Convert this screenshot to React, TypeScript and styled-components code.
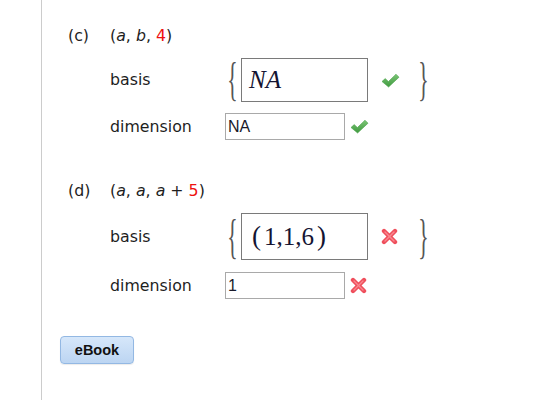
import React from "react";
import styled, { createGlobalStyle } from "styled-components";

const GlobalStyle = createGlobalStyle`
  html, body {
    margin: 0;
    padding: 0;
    background: #fff;
  }
`;

const Page = styled.div`
  margin-left: 41px;
  min-height: 400px;
  border-left: 1px solid #cccccc;
  font-family: "DejaVu Sans", Verdana, sans-serif;
  font-size: 15.8px;
  color: #1e1e1e;
  padding-top: 27px;
  box-sizing: border-box;
`;

const Part = styled.div<{ $gap?: number }>`
  padding-left: 26px;
  margin-bottom: ${(p) => p.$gap ?? 0}px;
`;

const PartHead = styled.div`
  display: flex;
  height: 18px;
  line-height: 18px;
`;

const PartLetter = styled.span`
  width: 42px;
`;

const Var = styled.i`
  font-style: italic;
`;

const Red = styled.span`
  color: #ee1111;
`;

const Row = styled.div<{ $top: number }>`
  display: grid;
  grid-template-columns: 115px auto;
  align-items: center;
  padding-left: 42px;
  margin-top: ${(p) => p.$top}px;
`;

const Label = styled.span`
  line-height: 18px;
`;

const Field = styled.div`
  display: flex;
  align-items: center;
`;

const Brace = styled.span<{ $h: number }>`
  font-family: "Liberation Serif", "Times New Roman", serif;
  font-size: 36px;
  line-height: 36px;
  color: #555;
  display: inline-block;
  width: 11px;
  text-align: center;
  transform: scaleY(${(p) => p.$h / 36}) scaleX(0.6);
  transform-origin: center;
`;

const MathBox = styled.div<{ $h: number }>`
  width: 127px;
  height: ${(p) => p.$h}px;
  box-sizing: border-box;
  border: 1px solid #7a7a7a;
  margin-left: 5px;
  display: flex;
  align-items: center;
  padding-left: 7px;
  font-family: "Liberation Serif", "Times New Roman", serif;
  font-size: 25px;
  color: #141432;
`;

const MathItalic = styled.span`
  font-style: italic;
`;

const Paren = styled.span`
  font-size: 27px;
  margin: 0 3px;
`;

const TextInput = styled.div`
  width: 120px;
  height: 27px;
  box-sizing: border-box;
  border: 1px solid #a9a9a9;
  font-family: "Liberation Sans", Arial, sans-serif;
  font-size: 16px;
  line-height: 25px;
  padding-left: 2px;
  color: #1a1a2a;
`;

const Mark = styled.span<{ $left: number; $right?: number }>`
  display: inline-flex;
  margin-left: ${(p) => p.$left}px;
  margin-right: ${(p) => p.$right ?? 0}px;
`;

const EBookButton = styled.button`
  margin: 37px 0 0 18px;
  width: 74px;
  height: 28px;
  border: 1px solid #93b8e3;
  border-radius: 4px;
  background: linear-gradient(#d6e7fa, #bcd5f2);
  font-family: "Liberation Sans", Arial, sans-serif;
  font-weight: bold;
  font-size: 14.5px;
  color: #111;
  padding: 0;
  box-shadow: 0 1px 1px rgba(0, 0, 0, 0.08);
`;

const Check = () => (
  <svg width="19" height="15" viewBox="0 0 19 15">
    <defs>
      <linearGradient id="ck" x1="0" y1="0" x2="0" y2="1">
        <stop offset="0" stopColor="#7cc576" />
        <stop offset="1" stopColor="#3f9a3f" />
      </linearGradient>
    </defs>
    <path
      d="M1 8.5 L4.2 5.6 L7.4 8.6 L15 1.2 L18 4.2 L7.6 14 Z"
      fill="url(#ck)"
      stroke="#4aa24a"
      strokeWidth="0.6"
      strokeLinejoin="round"
    />
  </svg>
);

const Cross = () => (
  <svg width="17" height="17" viewBox="0 0 17 17">
    <g stroke="#ef4f5c" strokeWidth="4.4" strokeLinecap="round">
      <line x1="3" y1="3" x2="14" y2="14" />
      <line x1="14" y1="3" x2="3" y2="14" />
    </g>
    <g stroke="#f9878f" strokeWidth="1.4" strokeLinecap="round">
      <line x1="4" y1="4" x2="13" y2="13" />
      <line x1="13" y1="4" x2="4" y2="13" />
    </g>
  </svg>
);

export default function App() {
  return (
    <>
      <GlobalStyle />
      <Page>
        <Part $gap={42}>
          <PartHead>
            <PartLetter>(c)</PartLetter>
            <span>
              (<Var>a</Var>, <Var>b</Var>, <Red>4</Red>)
            </span>
          </PartHead>
          <Row $top={13}>
            <Label>basis</Label>
            <Field>
              <Brace $h={46}>{"{"}</Brace>
              <MathBox $h={44}>
                <MathItalic>NA</MathItalic>
              </MathBox>
              <Mark $left={13} $right={16}>
                <Check />
              </Mark>
              <Brace $h={46}>{"}"}</Brace>
            </Field>
          </Row>
          <Row $top={11}>
            <Label>dimension</Label>
            <Field>
              <TextInput>NA</TextInput>
              <Mark $left={5}>
                <Check />
              </Mark>
            </Field>
          </Row>
        </Part>
        <Part>
          <PartHead>
            <PartLetter>(d)</PartLetter>
            <span>
              (<Var>a</Var>, <Var>a</Var>, <Var>a</Var> + <Red>5</Red>)
            </span>
          </PartHead>
          <Row $top={13}>
            <Label>basis</Label>
            <Field>
              <Brace $h={48}>{"{"}</Brace>
              <MathBox $h={47}>
                <Paren>(</Paren>1,1,6<Paren>)</Paren>
              </MathBox>
              <Mark $left={13} $right={18}>
                <Cross />
              </Mark>
              <Brace $h={48}>{"}"}</Brace>
            </Field>
          </Row>
          <Row $top={12}>
            <Label>dimension</Label>
            <Field>
              <TextInput>1</TextInput>
              <Mark $left={5}>
                <Cross />
              </Mark>
            </Field>
          </Row>
        </Part>
        <EBookButton>eBook</EBookButton>
      </Page>
    </>
  );
}
